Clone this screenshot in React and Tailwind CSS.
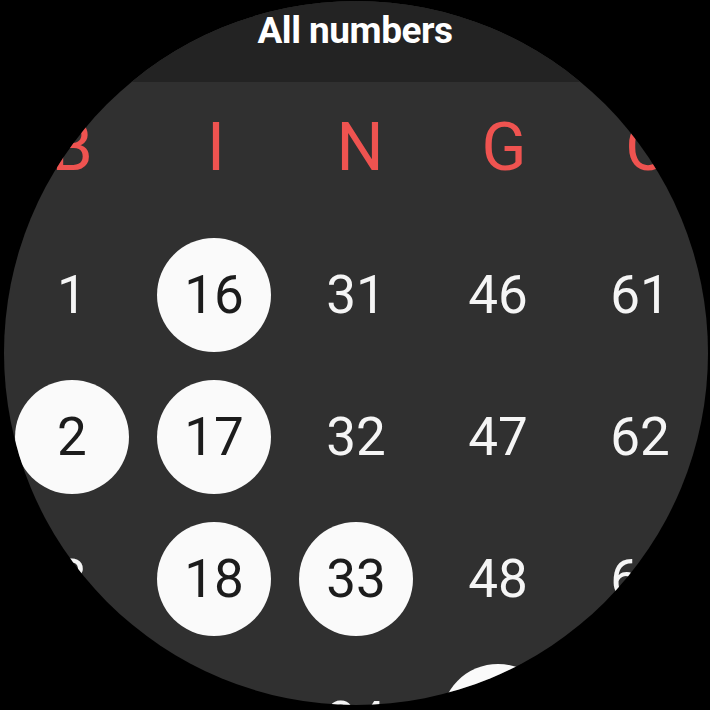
const LETTERS = ["B", "I", "N", "G", "O"];

// each column top to bottom, marked = drawn on a white disc
const ROWS = [
  [{ n: 1 }, { n: 16, marked: true }, { n: 31 }, { n: 46 }, { n: 61 }],
  [{ n: 2, marked: true }, { n: 17, marked: true }, { n: 32 }, { n: 47 }, { n: 62 }],
  [{ n: 3 }, { n: 18, marked: true }, { n: 33, marked: true }, { n: 48 }, { n: 63 }],
  [{ n: 4 }, { n: 19 }, { n: 34 }, { n: 49, marked: true }, { n: 64 }],
];

function Cell({ n, marked }) {
  return (
    <div className="flex items-center justify-center">
      {marked ? (
        <div className="flex h-[114px] w-[114px] items-center justify-center rounded-full bg-[#fafafa] text-[53px] leading-none text-[#1c1c1c]">
          {n}
        </div>
      ) : (
        <span className="text-[53px] leading-none text-[#f5f5f5]">{n}</span>
      )}
    </div>
  );
}

export default function App() {
  return (
    <div className="h-[710px] w-[710px] overflow-hidden bg-black font-['Roboto','Noto_Sans',sans-serif]">
      <div className="h-[710px] w-[710px] overflow-hidden bg-[#303030] [clip-path:circle(352px_at_356px_353px)]">
        {/* header */}
        <div className="flex h-[82px] justify-center bg-[#232323] pt-[12px]">
          <h1 className="text-[37px] font-bold leading-none tracking-[-0.5px] text-white">All numbers</h1>
        </div>

        {/* letters */}
        <div className="grid h-[131px] grid-cols-[repeat(5,144px)] items-center">
          {LETTERS.map((l) => (
            <div key={l} className="flex justify-center text-[66px] leading-none text-[#ef5350]">
              {l}
            </div>
          ))}
        </div>

        {/* numbers */}
        <div className="ml-[1px] mt-[11px] grid grid-cols-[repeat(5,142px)] grid-rows-[repeat(4,142px)]">
          {ROWS.map((row, r) =>
            row.map((c, i) => <Cell key={`${r}-${i}`} {...c} />)
          )}
        </div>
      </div>
    </div>
  );
}
